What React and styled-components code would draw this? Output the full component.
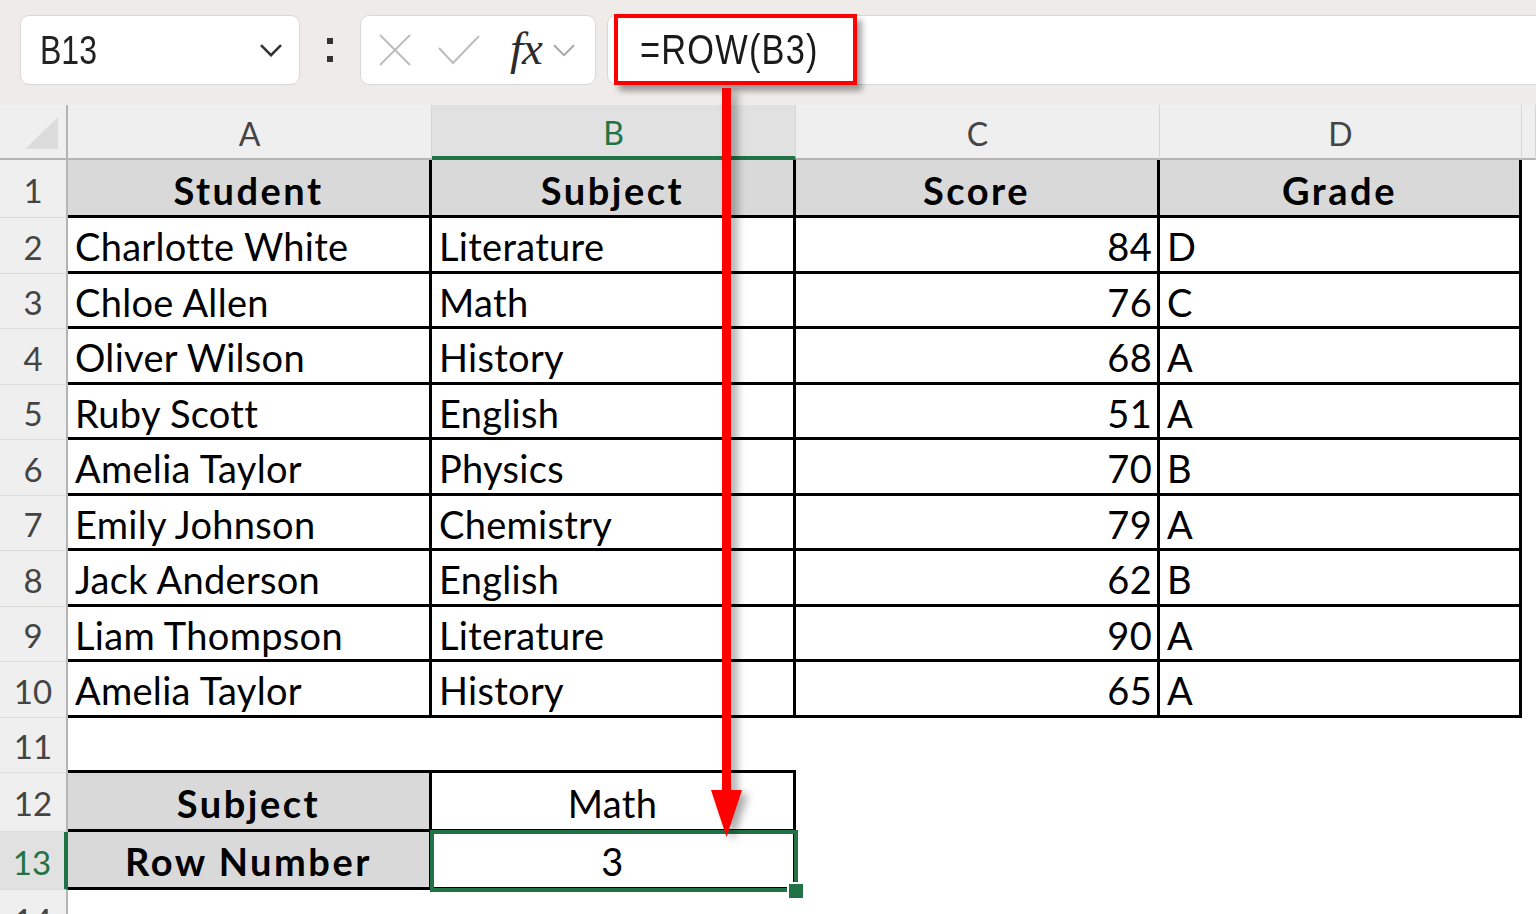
import React from 'react';
import styled, { createGlobalStyle } from 'styled-components';

const GREEN = '#217346';
const CELL_FONT = "Lato, 'Noto Sans', sans-serif";
const BAR_FONT = "'Liberation Sans', Arial, sans-serif";

const GlobalStyle = createGlobalStyle`
  html, body {
    margin: 0;
    padding: 0;
    background: #fff;
    overflow: hidden;
  }
  body {
    font-family: ${CELL_FONT};
  }
`;

const Page = styled.div`
  position: relative;
  width: 1536px;
  height: 914px;
  overflow: hidden;
  background: #fff;
`;

const TopBar = styled.div`
  height: 105px;
  box-sizing: border-box;
  padding: 15px 0 20px 20px;
  display: flex;
  align-items: stretch;
  background: #efebe8;
`;

const Box = styled.div`
  box-sizing: border-box;
  display: flex;
  align-items: center;
  background: #fff;
  border: 1.5px solid #dbd7d4;
  border-radius: 9px;
`;

/* the bar text in the reference is tall and narrow */
const Narrow = styled.span`
  display: inline-block;
  font-family: ${BAR_FONT};
  font-size: ${p => p.$size}px;
  letter-spacing: ${p => p.$spacing || 0}px;
  transform: scaleX(0.8);
  transform-origin: left center;
  white-space: nowrap;
`;

const NameBox = styled(Box)`
  width: 280px;
  justify-content: space-between;
  padding: 0 16px 0 19px;
  color: #222;
`;

const Colon = styled.div`
  width: 60px;
  display: flex;
  flex-direction: column;
  align-items: center;
  justify-content: center;
  gap: 12px;

  span {
    width: 6px;
    height: 6px;
    background: #333;
  }
`;

const FormulaButtons = styled(Box)`
  width: 236px;
  padding: 0 0 0 16px;
`;

const IconSlot = styled.div`
  width: ${p => p.$w}px;
  display: flex;
  align-items: center;
  justify-content: center;
`;

const Fx = styled.span`
  font-family: 'Liberation Serif', 'DejaVu Serif', serif;
  font-style: italic;
  font-size: 47px;
  color: #2b2b2b;
  letter-spacing: -1px;
  margin-top: -4px;
`;

const FormulaInput = styled(Box)`
  flex: 1;
  margin-left: 11px;
  border-right: none;
  border-radius: 9px 0 0 9px;
  padding-left: 5.5px;
`;

const Highlight = styled.div`
  box-sizing: border-box;
  width: 243px;
  height: 71px;
  margin-top: -1px;
  display: flex;
  align-items: center;
  padding-left: 22px;
  border: 4px solid #ff0000;
  box-shadow: 5px 6px 6px rgba(0, 0, 0, 0.35);
  color: #1a1a1a;
  background: #fff;
`;

const Sheet = styled.div`
  display: grid;
  grid-template-columns: 68px 364px 364px 364px 362px 1fr;
  grid-template-rows: 55px 58px repeat(10, 55.5px) 58.5px 58.5px 58px;
`;

const Corner = styled.div`
  position: relative;
  background: #efefef;
  border-right: 2px solid #b4b4b4;
  border-bottom: 2px solid #b4b4b4;
  box-sizing: border-box;

  &::after {
    content: '';
    position: absolute;
    left: 25px;
    top: 12px;
    width: 33px;
    height: 32px;
    background: #dcdcdc;
    clip-path: polygon(100% 0, 100% 100%, 0 100%);
  }
`;

const ColHead = styled.div`
  box-sizing: border-box;
  display: flex;
  align-items: center;
  justify-content: center;
  padding-top: 3px;
  background: ${p => (p.$active ? '#e1e1e1' : '#efefef')};
  border-right: 1.5px solid #d6d6d6;
  border-bottom: ${p => (p.$active ? `4px solid ${GREEN}` : '2px solid #b4b4b4')};
  color: ${p => (p.$active ? GREEN : '#444')};
  font-size: 32px;
`;

const RowHead = styled.div`
  box-sizing: border-box;
  display: flex;
  align-items: center;
  justify-content: center;
  padding-top: 3px;
  background: ${p => (p.$active ? '#e1e1e1' : '#efefef')};
  border-right: ${p => (p.$active ? `4px solid ${GREEN}` : '2px solid #b4b4b4')};
  border-bottom: 1px solid #dcdcdc;
  color: ${p => (p.$active ? GREEN : '#444')};
  font-size: 33px;
`;

const justify = { left: 'flex-start', center: 'center', right: 'flex-end' };

const Cell = styled.div`
  position: relative;
  box-sizing: border-box;
  display: flex;
  align-items: center;
  justify-content: ${p => justify[p.$align || 'left']};
  padding: 4px ${p => (p.$align === 'right' ? 5 : 7)}px 0 7px;
  border-right: 3px solid #000;
  border-bottom: 3px solid #000;
  background: ${p => (p.$head ? '#d9d9d9' : '#fff')};
  font-weight: ${p => (p.$head ? 700 : 400)};
  font-size: 38px;
  letter-spacing: ${p => (p.$head ? 2.5 : 0.3)}px;
  color: #000;
  white-space: nowrap;
`;

const Blank = styled.div`
  box-sizing: border-box;
  grid-column: span ${p => p.$span || 1};
  border-bottom: ${p => (p.$line ? '3px solid #000' : 'none')};
  background: #fff;
`;

const Selection = styled.span`
  position: absolute;
  left: -2px;
  top: -2px;
  right: -5px;
  bottom: -5px;
  border: 4px solid ${GREEN};
  pointer-events: none;
`;

const FillHandle = styled.span`
  position: absolute;
  right: -10px;
  bottom: -11px;
  width: 14px;
  height: 14px;
  background: ${GREEN};
  border-left: 2px solid #fff;
  border-top: 2px solid #fff;
`;

const ArrowLayer = styled.svg`
  position: absolute;
  left: 0;
  top: 0;
  pointer-events: none;
  filter: drop-shadow(6px 4px 4px rgba(0, 0, 0, 0.35));
`;

const Chevron = ({ color = '#333', w = 24, sw = 2.6 }) => (
  <svg width={w} height={w * 0.6} viewBox="0 0 24 14">
    <polyline points="2,2 12,12 22,2" fill="none" stroke={color} strokeWidth={sw} />
  </svg>
);

const columns = ['A', 'B', 'C', 'D'];
const heads = ['Student', 'Subject', 'Score', 'Grade'];
const rows = [
  ['Charlotte White', 'Literature', 84, 'D'],
  ['Chloe Allen', 'Math', 76, 'C'],
  ['Oliver Wilson', 'History', 68, 'A'],
  ['Ruby Scott', 'English', 51, 'A'],
  ['Amelia Taylor', 'Physics', 70, 'B'],
  ['Emily Johnson', 'Chemistry', 79, 'A'],
  ['Jack Anderson', 'English', 62, 'B'],
  ['Liam Thompson', 'Literature', 90, 'A'],
  ['Amelia Taylor', 'History', 65, 'A'],
];

const App = () => (
  <Page>
    <GlobalStyle />
    <TopBar>
      <NameBox>
        <Narrow $size={40}>B13</Narrow>
        <Chevron />
      </NameBox>
      <Colon>
        <span />
        <span />
      </Colon>
      <FormulaButtons>
        <IconSlot $w={36}>
          <svg width="34" height="34" viewBox="0 0 34 34">
            <path d="M2 2L32 32M32 2L2 32" stroke="#bdbdbd" strokeWidth="2" />
          </svg>
        </IconSlot>
        <IconSlot $w={92}>
          <svg width="44" height="32" viewBox="0 0 44 32">
            <polyline points="2,14 16,29 42,2" fill="none" stroke="#bdbdbd" strokeWidth="2" />
          </svg>
        </IconSlot>
        <IconSlot $w={42}>
          <Fx>fx</Fx>
        </IconSlot>
        <IconSlot $w={34}>
          <Chevron color="#a8a8a8" w={24} sw={2} />
        </IconSlot>
      </FormulaButtons>
      <FormulaInput>
        <Highlight>
          <Narrow $size={43} $spacing={1.5}>=ROW(B3)</Narrow>
        </Highlight>
      </FormulaInput>
    </TopBar>

    <Sheet>
      <Corner />
      {columns.map(c => (
        <ColHead key={c} $active={c === 'B'}>
          {c}
        </ColHead>
      ))}
      <ColHead />

      <RowHead>1</RowHead>
      {heads.map(h => (
        <Cell key={h} $head $align="center">
          {h}
        </Cell>
      ))}
      <Blank />

      {rows.map((r, i) => (
        <React.Fragment key={i}>
          <RowHead>{i + 2}</RowHead>
          <Cell>{r[0]}</Cell>
          <Cell>{r[1]}</Cell>
          <Cell $align="right">{r[2]}</Cell>
          <Cell>{r[3]}</Cell>
          <Blank />
        </React.Fragment>
      ))}

      <RowHead>11</RowHead>
      <Blank $line />
      <Blank $line />
      <Blank $span={3} />

      <RowHead>12</RowHead>
      <Cell $head $align="center">Subject</Cell>
      <Cell $align="center">Math</Cell>
      <Blank $span={3} />

      <RowHead $active>13</RowHead>
      <Cell $head $align="center">Row Number</Cell>
      <Cell $align="center">
        3
        <Selection />
        <FillHandle />
      </Cell>
      <Blank $span={3} />

      <RowHead>14</RowHead>
      <Blank $span={5} />
    </Sheet>

    <ArrowLayer width="1536" height="914" viewBox="0 0 1536 914">
      <rect x="722" y="88" width="9" height="705" fill="#ff0000" />
      <polygon points="711,790 742,790 726.5,837" fill="#ff0000" />
    </ArrowLayer>
  </Page>
);

export default App;
